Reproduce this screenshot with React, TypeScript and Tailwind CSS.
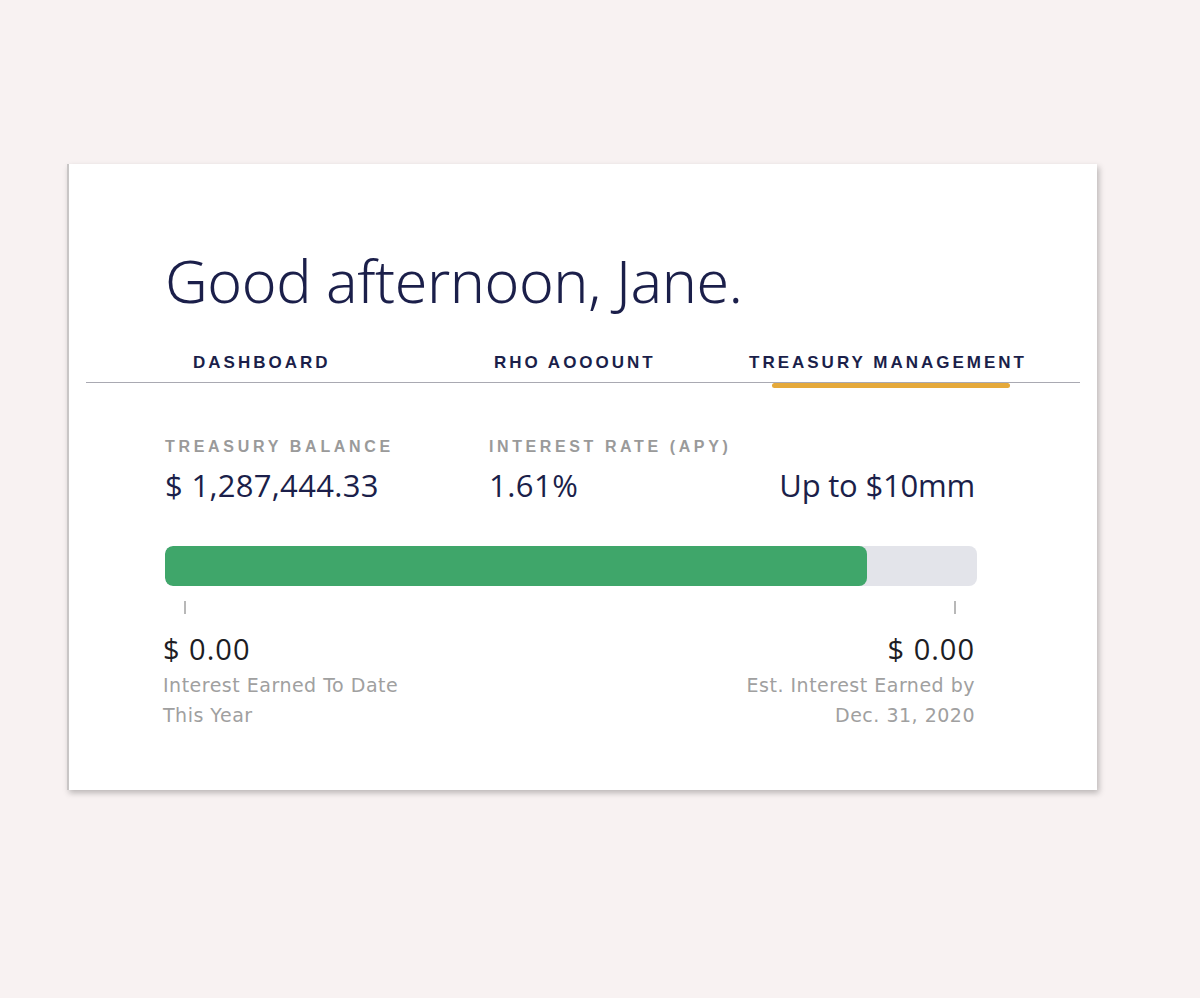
import React from "react";

const TAB_FONT = { fontFamily: '"Liberation Sans", Arial, sans-serif' };
const CAP_FONT = { fontFamily: '"DejaVu Sans", sans-serif' };

export default function App() {
  return (
    <div className="w-[1200px] h-[998px] bg-[#f8f2f2] overflow-hidden" style={{ fontFamily: '"Open Sans", sans-serif' }}>
      <div className="ml-[67px] mt-[164px] w-[1030px] h-[626px] bg-white border-l-2 border-l-[#c9c6c6] shadow-[2px_3px_6px_rgba(0,0,0,0.25)] flex flex-col">
        <div className="pl-[96px] pt-[78px]">
          <h1 className="text-[59px] leading-[76px] text-[#1b1f4a] font-light tracking-[-0.4px]" style={{ fontFamily: '"Noto Sans", sans-serif' }}>
            Good afternoon, Jane.
          </h1>
        </div>
        <div className="mx-[17px] mt-[22px] border-b border-[#a9a9b2] relative">
          <div className="flex items-end h-[42px] pb-[10px] text-[17px] leading-[18px] font-bold tracking-[3px] text-[#1b1f4a]" style={TAB_FONT}>
            <span className="ml-[107px] w-[301px]">DASHBOARD</span>
            <span className="w-[255px]">RHO AOOOUNT</span>
            <span>TREASURY MANAGEMENT</span>
          </div>
          <div className="absolute left-[686px] top-[43px] w-[238px] h-[5px] bg-[#e5a93a] rounded-sm" />
        </div>
        <div className="pl-[96px] pr-[120px] pt-[54px]">
          <div className="flex items-end">
            <div className="w-[324px]">
              <div className="text-[16px] font-bold tracking-[3.7px] text-[#9a9a9a] leading-[20px]" style={TAB_FONT}>TREASURY BALANCE</div>
              <div className="text-[31px] leading-[38px] text-[#1b1f4a] mt-[9px] tracking-[0.3px]">$ 1,287,444.33</div>
            </div>
            <div className="flex-1">
              <div className="text-[16px] font-bold tracking-[3.6px] text-[#9a9a9a] leading-[20px]" style={TAB_FONT}>INTEREST RATE (APY)</div>
              <div className="text-[31px] leading-[38px] text-[#1b1f4a] mt-[9px] tracking-[0.5px]">1.61%</div>
            </div>
            <div className="text-[31px] leading-[38px] text-[#1b1f4a] tracking-[-0.2px] pr-[2px]">Up to $10mm</div>
          </div>
          <div className="mt-[42px] h-[40px] rounded-[8px] bg-[#e3e4ea] overflow-hidden flex">
            <div className="h-full bg-[#3fa66a] rounded-[8px]" style={{ width: "86.5%" }} />
          </div>
          <div className="flex justify-between pl-[19px] pr-[21px] mt-[15px]">
            <div className="w-[2px] h-[13px] bg-[#b8b8b8]" />
            <div className="w-[2px] h-[13px] bg-[#b8b8b8]" />
          </div>
          <div className="flex justify-between mt-[17px]">
            <div className="-ml-[2px]">
              <div className="text-[29px] leading-[36px] text-[#1d1d24] tracking-[1px]">$ 0.00</div>
              <div className="mt-[3px] text-[19px] leading-[30px] text-[#a0a0a0] tracking-[0.5px]" style={CAP_FONT}>
                Interest Earned To Date<br />This Year
              </div>
            </div>
            <div className="text-right pr-[2px]">
              <div className="text-[29px] leading-[36px] text-[#1d1d24] tracking-[1px]">$ 0.00</div>
              <div className="mt-[3px] text-[19px] leading-[30px] text-[#a0a0a0] tracking-[0.5px]" style={CAP_FONT}>
                Est. Interest Earned by<br />Dec. 31, 2020
              </div>
            </div>
          </div>
        </div>
      </div>
    </div>
  );
}
